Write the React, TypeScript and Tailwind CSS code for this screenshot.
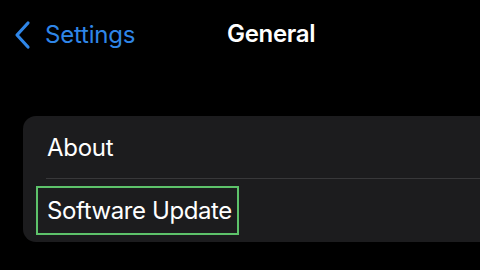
import React from "react";

export default function App() {
  return (
    <div className="w-[480px] h-[270px] bg-black overflow-hidden text-white" style={{ fontFamily: "Inter, 'Noto Sans', sans-serif" }}>
      <div className="relative h-[68px] flex items-center">
        <div className="flex items-center pl-[13px] pt-[1px] text-[#2f86e8]">
          <svg width="19" height="30" viewBox="0 0 19 30" className="mr-[13px]">
            <path d="M15 3 L4 15 L15 27" fill="none" stroke="#2f86e8" strokeWidth="3.2" strokeLinecap="round" strokeLinejoin="round" />
          </svg>
          <span className="text-[24px] leading-none tracking-[-0.2px]">Settings</span>
        </div>
        <span className="absolute left-[227px] top-[22px] text-[24px] leading-none font-semibold tracking-[-0.3px]">General</span>
      </div>
      <div className="ml-[23px] mt-[48px] w-[480px] h-[126px] rounded-l-[13px] bg-[#1c1c1e] flex flex-col">
        <div className="h-[63px] ml-[23px] flex items-center pl-[1px] pt-[1px] border-b border-[#38383a]">
          <span className="text-[24px] leading-none tracking-[-0.3px]">About</span>
        </div>
        <div className="h-[63px] flex items-center pl-[13px]">
          <div className="h-[49px] w-[203px] border-2 border-[#5dc26a] flex items-center pl-[9px]">
            <span className="text-[24px] leading-none tracking-[-0.4px]">Software Update</span>
          </div>
        </div>
      </div>
    </div>
  );
}
